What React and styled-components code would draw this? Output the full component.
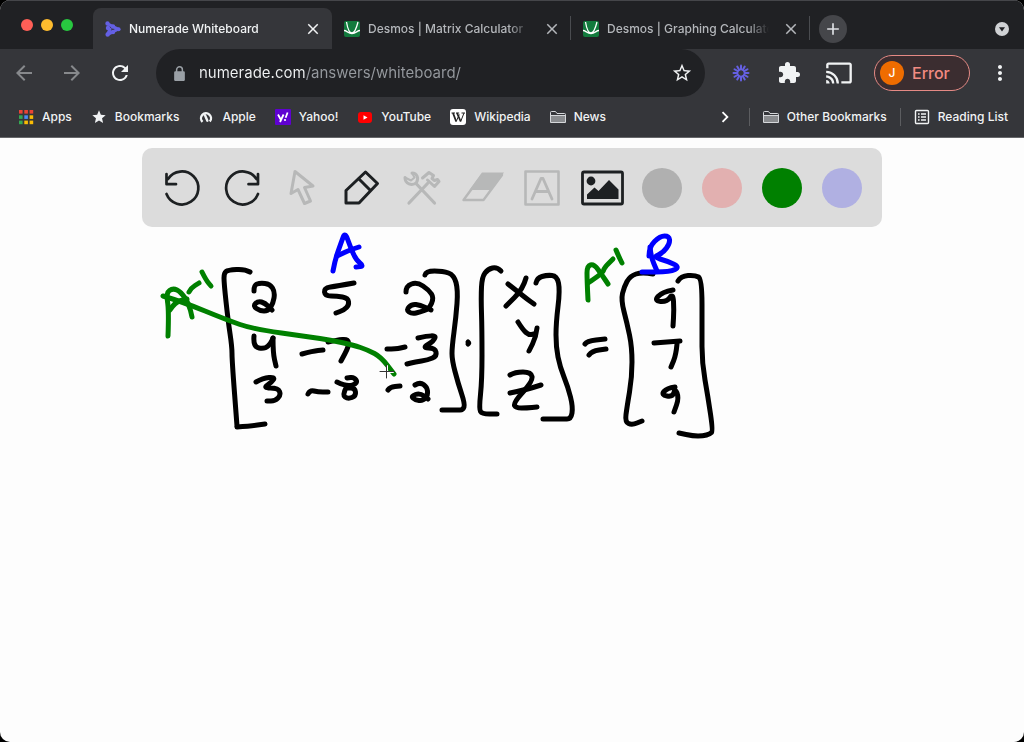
import React, { useState } from 'react';
import styled, { createGlobalStyle } from 'styled-components';
import {
    MdArrowBack, MdArrowForward, MdRefresh, MdStarBorder, MdStar,
    MdExtension, MdCast, MdMoreVert, MdClose, MdAdd, MdChevronRight,
} from 'react-icons/md';

const tabs = [
    { title: 'Numerade Whiteboard', icon: 'numerade', active: true },
    { title: 'Desmos | Matrix Calculator', icon: 'desmos' },
    { title: 'Desmos | Graphing Calculator', icon: 'desmos' },
];

const bookmarks = [
    { label: 'Apps', Icon: AppsIcon },
    { label: 'Bookmarks', Icon: StarIcon },
    { label: 'Apple', Icon: AppleIcon },
    { label: 'Yahoo!', Icon: YahooIcon },
    { label: 'YouTube', Icon: YoutubeIcon },
    { label: 'Wikipedia', Icon: WikipediaIcon },
    { label: 'News', Icon: FolderIcon },
];

const tools = [
    { name: 'Undo', Icon: UndoIcon },
    { name: 'Redo', Icon: RedoIcon },
    { name: 'Select', Icon: PointerIcon, faded: true },
    { name: 'Pen', Icon: PenIcon },
    { name: 'Tools', Icon: ToolsIcon, faded: true },
    { name: 'Eraser', Icon: EraserIcon, faded: true },
    { name: 'Text', Icon: TextIcon, faded: true },
    { name: 'Image', Icon: ImageIcon },
];

const colors = [
    { name: 'black', full: '#000000', soft: '#b0b0b0' },
    { name: 'red', full: '#e00000', soft: '#e2b0b0' },
    { name: 'green', full: '#008000', soft: '#b0d0b0' },
    { name: 'blue', full: '#0000ff', soft: '#b0b0e2' },
];

// every stroke is a list of x y pairs on the board
const strokes = [
    // matrix A
    ['black', '250 272 245 269 228 270 224 273 224 283 228 320 232 347 232 360 237 426'],
    ['black', '237 427 250 426 265 424'],
    ['black', '254 291 254 285 260 283 270 284 275 292 273 304 268 311 260 311 253 306 258 301 265 303 272 310'],
    ['black', '354 283 337 286 324 288 325 296 337 296 348 298 349 305 344 310 336 313'],
    ['black', '406 292 406 286 417 282 429 290 434 298 429 309 420 312 412 314 406 310 412 304 420 305 431 310'],
    ['black', '254 336 253 347 265 349 271 343 273 338'],
    ['black', '273 338 273 353 276 366'],
    ['black', '302 354 313 351 323 350'],
    ['black', '328 342 337 340 348 339 349 346 341 361'],
    ['black', '387 349 396 349 405 347'],
    ['black', '418 338 436 334 434 341 422 348 435 348 437 356 428 360 415 362 407 364'],
    ['black', '256 382 263 378 275 377 272 382 263 388 278 388 281 395 275 401 267 401'],
    ['black', '308 394 310 390 318 392 328 392'],
    ['black', '337 382 347 387 358 383 354 377 347 378'],
    ['black', '347 386 342 395 348 399 356 396 355 388 347 388'],
    ['black', '388 390 390 387 400 386'],
    ['black', '415 385 420 382 427 387 428 395 423 401 415 400 411 396 420 393 428 399'],
    ['black', '425 275 426 271 443 271 454 275 458 290 456 317 452 347 452 360 458 383 465 404 463 410 457 410 442 410'],
    // dot
    ['black', '468 342 469 343 468 344'],
    // x y z
    ['black', '501 271 497 267 488 269 482 277 481 297 482 330 482 380 479 409 482 414 497 414'],
    ['black', '508 284 517 291 527 299 534 304'],
    ['black', '526 278 523 289 506 306'],
    ['black', '518 322 523 330 529 335 534 334'],
    ['black', '537 328 536 337 529 351'],
    ['black', '510 375 515 372 531 372 533 381 513 403 516 408 527 408 537 407'],
    ['black', '510 393 525 390 541 385'],
    ['black', '536 283 537 278 547 275 557 276 560 290 556 323 556 347 560 367 568 387 573 407 571 419 563 419 543 419'],
    // equals
    ['black', '585 344 587 341 605 339'],
    ['black', '589 355 592 351 606 349'],
    // vector B
    ['black', '653 274 642 272 630 276 624 287 621 300 627 323 632 347 632 377 627 407 625 422 632 425 642 421'],
    ['black', '673 290 662 292 654 301 667 302 673 293 674 310 673 326'],
    ['black', '654 343 667 342 680 341'],
    ['black', '677 344 676 355 671 367'],
    ['black', '675 387 667 388 661 395 673 397 675 388 679 398 674 412'],
    ['black', '678 281 681 276 695 275 702 279 702 330 702 363 708 397 713 431 710 434 703 436 693 436 679 433'],
    // labels
    ['blue', '333 271 335 260 341 243 345 232 350 246 356 260 364 266 356 267'],
    ['blue', '337 256 347 251 359 247'],
    ['blue', '649 256 649 247 660 236 669 236 670 243 663 253 653 257 667 261 680 267 670 272 642 272'],
    ['blue', '650 247 651 257 657 271'],
    ['green', '588 300 587 280 587 266 594 264 602 275 608 284'],
    ['green', '588 283 603 273 604 268 613 259'],
    ['green', '616 250 619 257 622 263'],
    ['green', '168 336 169 310 166 293 173 288 181 292 189 304 192 317'],
    ['green', '170 310 175 302 187 299'],
    ['green', '189 292 191 288 199 283'],
    ['green', '202 272 206 280 211 286'],
    ['green', '163 296 183 302 227 320 253 329 310 337 330 340 353 345 368 350 381 357 394 374'],
];

// rounds the corners of a stroke with quadratic curves through the midpoints
function toPath(text) {
    const n = text.split(' ').map(Number);
    let d = `M${n[0]} ${n[1]}`;
    for (let i = 2; i < n.length - 2; i += 2) {
        const mx = (n[i] + n[i + 2]) / 2;
        const my = (n[i + 1] + n[i + 3]) / 2;
        d += ` Q${n[i]} ${n[i + 1]} ${mx} ${my}`;
    }
    return `${d} L${n[n.length - 2]} ${n[n.length - 1]}`;
}

function App() {
    const [url, setUrl] = useState('numerade.com/answers/whiteboard/');
    const [color, setColor] = useState('green');

    return (
        <Window>
            <GlobalStyle />
            <TabStrip>
                <Lights>
                    <Light $color="#ff5f57" />
                    <Light $color="#febc2e" />
                    <Light $color="#28c840" />
                </Lights>
                {tabs.map((tab) => (
                    <Tab key={tab.title} $active={tab.active}>
                        {tab.icon === 'numerade' ? <NumeradeIcon /> : <DesmosIcon />}
                        <TabTitle>{tab.title}</TabTitle>
                        <IconButton $size={18} aria-label="Close tab"><MdClose /></IconButton>
                    </Tab>
                ))}
                <NewTab aria-label="New tab"><MdAdd /></NewTab>
                <TabSearch aria-label="Search tabs">
                    <svg width="14" height="14" viewBox="0 0 14 14">
                        <circle cx="7" cy="7" r="7" fill="#d0d2d5" />
                        <path d="M4 5.3h6L7 9.5z" fill="#202124" />
                    </svg>
                </TabSearch>
            </TabStrip>

            <NavBar>
                <NavButtons>
                    <IconButton $size={24} $color="#87898c" aria-label="Back"><MdArrowBack /></IconButton>
                    <IconButton $size={24} $color="#87898c" aria-label="Forward"><MdArrowForward /></IconButton>
                    <IconButton $size={24} aria-label="Reload"><MdRefresh /></IconButton>
                </NavButtons>
                <AddressBar>
                    <LockIcon />
                    <Address aria-label="Address" value={url} onChange={(e) => setUrl(e.target.value)} />
                    <IconButton $size={22} aria-label="Bookmark this page"><MdStarBorder /></IconButton>
                </AddressBar>
                <Extensions>
                    <IconButton $size={24} aria-label="Loom"><LoomIcon /></IconButton>
                    <IconButton $size={24} aria-label="Extensions"><MdExtension /></IconButton>
                    <IconButton $size={28} aria-label="Cast"><MdCast /></IconButton>
                </Extensions>
                <Profile>
                    <Avatar>J</Avatar>
                    Error
                </Profile>
                <IconButton $size={24} aria-label="Menu"><MdMoreVert /></IconButton>
            </NavBar>

            <BookmarkBar>
                {bookmarks.map(({ label, Icon }) => (
                    <Bookmark key={label} href="#"><Icon />{label}</Bookmark>
                ))}
                <More aria-label="More bookmarks"><MdChevronRight /></More>
                <Divider />
                <Bookmark href="#"><FolderIcon />Other Bookmarks</Bookmark>
                <Divider />
                <Bookmark href="#"><ListIcon />Reading List</Bookmark>
            </BookmarkBar>

            <Board>
                <Tools>
                    {tools.map(({ name, Icon, faded }) => (
                        <Tool key={name} aria-label={name} $faded={faded}><Icon /></Tool>
                    ))}
                    {colors.map((c) => (
                        <Swatch
                            key={c.name}
                            type="radio"
                            name="color"
                            aria-label={c.name}
                            checked={color === c.name}
                            onChange={() => setColor(c.name)}
                            $full={c.full}
                            $soft={c.soft}
                        />
                    ))}
                </Tools>
                <Sketch viewBox="142 227 740 220">
                    {strokes.map(([ink, points]) => (
                        <path key={points} d={toPath(points)} stroke={ink} />
                    ))}
                    <path d="M387 366v12M381 372h12" stroke="#fff" strokeWidth="2" />
                    <path d="M386.5 365v13M380 371.5h14" stroke="#333" strokeWidth="1" />
                </Sketch>
            </Board>
        </Window>
    );
}

function NumeradeIcon() {
    return (
        <svg width="16" height="16" viewBox="0 0 16 16" fill="none" stroke="#6460e4" strokeLinecap="round">
            <path d="M3 3l10 5.2M3 13.5l10-5.3M5 8.2L2.5 13.5" strokeWidth="3" />
            <path d="M2.500 2.500v.01M3 7v.01M8 5.500v.01M8 11v.01M2.600 13.500v.01" strokeWidth="4.400" />
            <path d="M13.600 8.200v.01" strokeWidth="4" />
        </svg>
    );
}

function DesmosIcon() {
    return (
        <svg width="16" height="16" viewBox="0 0 16 16" fill="none">
            <rect width="16" height="16" rx="2" fill="#127a3d" />
            <path d="M2.500 1c1 6 3 11 5.500 11s4.500-5 6-11M0 9.500c3 0 4 3 8 3s5-3 8-3" stroke="#fff" strokeWidth="1.300" />
        </svg>
    );
}

function LockIcon() {
    return (
        <svg width="14" height="14" viewBox="0 0 14 14" fill="none" stroke="#9aa0a6">
            <rect x="2" y="5" width="10" height="9" rx="1.200" fill="#9aa0a6" stroke="none" />
            <path d="M4.300 6V3.500a2.700 2.700 0 0 1 5.400 0V6" strokeWidth="1.400" />
        </svg>
    );
}

function LoomIcon() {
    return (
        <svg viewBox="0 0 24 24" stroke="#6560e2" strokeWidth="2" strokeLinecap="round">
            {[...Array(12)].map((_, i) => (
                <path key={i} d="M12 4.500v3.800" transform={`rotate(${i * 30} 12 12)`} />
            ))}
            <circle cx="12" cy="12" r="3.500" fill="none" strokeWidth="1.400" />
        </svg>
    );
}

function AppsIcon() {
    const fills = ['#ea4335', '#ea4335', '#ea4335', '#34a853', '#4c8bf5', '#fbbc04', '#34a853', '#fbbc04', '#fbbc04'];
    return (
        <svg width="16" height="16" viewBox="0 0 16 16">
            {fills.map((fill, i) => (
                <rect key={i} x={1 + (i % 3) * 5.3} y={1 + Math.floor(i / 3) * 5.3} width="3.600" height="3.600" fill={fill} />
            ))}
        </svg>
    );
}

function StarIcon() {
    return <MdStar size={16} />;
}

function AppleIcon() {
    return (
        <svg width="16" height="16" viewBox="0 0 16 16" fill="none" stroke="#f1f3f4">
            <path d="M4.500 12.800A5 5 0 1 1 11.800 12.500" strokeWidth="2.400" />
            <path d="M7 6.200l2.400 5.500" strokeWidth="2.400" strokeLinecap="round" />
        </svg>
    );
}

function YahooIcon() {
    return (
        <svg width="16" height="16" viewBox="0 0 16 16" fill="none" stroke="#fff" strokeWidth="1.800">
            <rect width="16" height="16" rx="1" fill="#5f01d1" stroke="none" />
            <path d="M3 5.500l2.600 4.800M8.600 5.500L5 13M12.600 3.500l-2 5.200" />
            <circle cx="10" cy="11" r="1.100" fill="#fff" stroke="none" />
        </svg>
    );
}

function YoutubeIcon() {
    return (
        <svg width="16" height="16" viewBox="0 0 16 16">
            <rect x="1" y="3" width="14" height="11" rx="3" fill="#f00" />
            <path d="M6.500 6.200v4.600l4-2.300z" fill="#fff" />
        </svg>
    );
}

function WikipediaIcon() {
    return (
        <svg width="16" height="16" viewBox="0 0 16 16" fill="none" stroke="#222">
            <rect width="16" height="16" rx="3" fill="#fff" stroke="none" />
            <path d="M3 4l3.200 8.500M7 4l3.700 8.500" strokeWidth="1.800" />
            <path d="M6.200 12.500L9.300 5.500M10.700 12.500L14 4M1.500 4h3.500M6 4h3.200M11.500 4h3.500" strokeWidth="1" />
        </svg>
    );
}

function FolderIcon() {
    return (
        <svg width="16" height="16" viewBox="0 0 16 16" fill="none" stroke="#d5d7da">
            <path d="M.5 13.500V3.500q0-1 1-1h4l1.500 2h7.500q1 0 1 1v8z" />
            <path d="M1 7h14v6H1z" fill="#898b8e" stroke="none" />
            <path d="M1 6.500h14" />
        </svg>
    );
}

function ListIcon() {
    return (
        <svg width="16" height="16" viewBox="0 0 16 16" fill="none" stroke="#f1f3f4" strokeWidth="1.400">
            <rect x="1.500" y="1.500" width="13" height="13" rx="1" />
            <path d="M4 5h1.600M4 8h1.600M4 11h1.600M7 5h5M7 8h5M7 11h5" />
        </svg>
    );
}

function UndoIcon() {
    return (
        <svg viewBox="0 0 44 44">
            <path d="M6.500 28a16.500 16.500 0 1 0 1.500-15M6.500 8v10.200h9.500" strokeWidth="2.700" />
        </svg>
    );
}

function RedoIcon() {
    return (
        <svg viewBox="0 0 44 44">
            <path d="M38 28a16.500 16.500 0 1 1-1.500-15M38 8v10.200H28.500" strokeWidth="2.700" />
        </svg>
    );
}

function PointerIcon() {
    return (
        <svg viewBox="0 0 44 44">
            <path d="M15 5.500L11 27.500l7-4 6.500 14 6-2.500-6-13.500 8.500-1.500z" strokeWidth="3" />
        </svg>
    );
}

function PenIcon() {
    return (
        <svg viewBox="0 0 44 44">
            <path d="M25.500 6L37.500 17.500 19 37H6V24.500zM18.500 12.500L30.500 24.500" strokeWidth="3" />
        </svg>
    );
}

function ToolsIcon() {
    return (
        <svg viewBox="0 0 44 44">
            <path d="M9 37L27.500 17.500M34.500 37L16.500 18" strokeWidth="3.200" />
            <path d="M12 7c5 0 7 5 4.500 9.500-4.500 4-11.500 1.500-11.500-5" strokeWidth="3" />
            <path d="M12 7l2.500 4.500-3.500 3-6-3" strokeWidth="2" />
            <path d="M22.500 12l6.500-5.500 4.500 3-1.500 3 2.500 2 3-1 1.500 2-4.500 5-7-6.500" strokeWidth="3" />
        </svg>
    );
}

function EraserIcon() {
    return (
        <svg viewBox="0 0 44 44">
            <path d="M22 6.500H44L31 24H9.500z" fill="currentColor" stroke="none" />
            <path d="M22 9L3.500 34H23.500L42 9" strokeWidth="2.400" />
        </svg>
    );
}

function TextIcon() {
    return (
        <svg viewBox="0 0 44 44">
            <rect x="5.500" y="5.500" width="33" height="33" strokeWidth="2.600" />
            <path d="M12 33L21 12.500h2L32 33M15.500 25.500h13" strokeWidth="2.800" />
        </svg>
    );
}

function ImageIcon() {
    return (
        <svg viewBox="0 0 44 44">
            <rect x="2.500" y="6" width="40" height="32" rx="1.500" strokeWidth="2.800" />
            <circle cx="11" cy="15" r="4.400" fill="currentColor" stroke="none" />
            <path d="M7 33v-4.500l7.500-7 4 3.500L29 14l9.500 9.500V33z" fill="currentColor" stroke="none" />
        </svg>
    );
}

const GlobalStyle = createGlobalStyle`
  * {
    box-sizing: border-box;
  }

  body {
    margin: 0;
    background: #000;
    font-family: Inter, "Liberation Sans", sans-serif;
  }

  button {
    padding: 0;
    border: none;
    background: none;
    font: inherit;
    cursor: pointer;
  }
`;

const Window = styled.div`
  display: flex;
  flex-direction: column;
  min-height: 100vh;
  border-radius: 10px;
  overflow: hidden;
  background: #fdfdfd;
`;

const TabStrip = styled.div`
  display: flex;
  align-items: center;
  height: 49px;
  padding: 7px 15px 0 21px;
  background: #202124;
  border-top: 1px solid #45464a;
`;

const Lights = styled.div`
  display: flex;
  gap: 8px;
  width: 72px;
  padding-bottom: 7px;
`;

const Light = styled.span`
  width: 12px;
  height: 12px;
  border-radius: 50%;
  background: ${(p) => p.$color};
`;

const Tab = styled.div`
  display: flex;
  align-items: center;
  gap: 8px;
  flex: 0 1 239px;
  min-width: 0;
  height: 100%;
  padding: 0 10px 0 12px;
  border-radius: 8px 8px 0 0;
  background: ${(p) => (p.$active ? '#35363a' : 'transparent')};
  color: ${(p) => (p.$active ? '#f1f3f4' : '#b4b7bb')};

  > svg {
    flex: none;
  }

  button {
    color: inherit;
  }

  & + & {
    background-image: linear-gradient(#4a4c50, #4a4c50);
    background-size: 1px 24px;
    background-position: right 8px;
    background-repeat: no-repeat;
  }
`;

const TabTitle = styled.span`
  flex: 1;
  overflow: hidden;
  font-size: 12px;
  font-weight: 500;
  line-height: 16px;
  white-space: nowrap;
  mask-image: linear-gradient(to right, #000 84%, transparent 97%);
`;

const IconButton = styled.button`
  display: flex;
  flex: none;
  color: ${(p) => p.$color || '#f1f3f4'};

  svg {
    width: ${(p) => p.$size}px;
    height: ${(p) => p.$size}px;
  }
`;

const NewTab = styled.button`
  display: flex;
  flex: none;
  align-items: center;
  justify-content: center;
  width: 28px;
  height: 28px;
  margin: 0 auto 0 9px;
  border-radius: 50%;
  background: #45464a;
  color: #dfe1e5;
  font-size: 20px;
`;

const TabSearch = styled.button`
  display: flex;
`;

const NavBar = styled.div`
  display: flex;
  align-items: center;
  height: 48px;
  padding: 0 12px;
  background: #35363a;
`;

const NavButtons = styled.div`
  display: flex;
  gap: 24px;
  width: 144px;
`;

const AddressBar = styled.div`
  display: flex;
  flex: 1;
  align-items: center;
  gap: 12px;
  min-width: 0;
  height: 48px;
  padding: 0 12px 0 16px;
  border-radius: 24px;
  background: #202124;

  > svg {
    flex: none;
    width: 15px;
    height: 15px;
  }
`;

const Address = styled.input`
  flex: 1;
  min-width: 0;
  padding: 0;
  border: none;
  outline: none;
  /* the host is brighter than the path */
  background: linear-gradient(to right, #f1f3f4 107px, #969a9f 107px);
  background-clip: text;
  color: transparent;
  caret-color: #fff;
  font-family: Inter, "Liberation Sans", sans-serif;
  font-size: 15px;
  line-height: 20px;
`;

const Extensions = styled.div`
  display: flex;
  align-items: center;
  gap: 24px;
  padding: 0 21px 0 24px;
`;

const Profile = styled.button`
  display: flex;
  flex: none;
  align-items: center;
  gap: 8px;
  width: 96px;
  height: 36px;
  margin-right: 18px;
  padding: 0 5px;
  border: 1px solid #e58a85;
  border-radius: 18px;
  background: #3b2d30;
  color: #f28b82;
  font-size: 16px;
  font-weight: 500;
`;

const Avatar = styled.span`
  width: 24px;
  height: 24px;
  border-radius: 50%;
  background: #ef6c00;
  color: #fff;
  font-size: 12px;
  line-height: 24px;
`;

const BookmarkBar = styled.nav`
  display: flex;
  align-items: center;
  gap: 19px;
  height: 41px;
  padding: 0 16px 0 18px;
  background: #35363a;
  border-bottom: 1px solid #66676a;
`;

const Bookmark = styled.a`
  display: flex;
  flex: none;
  align-items: center;
  gap: 8px;
  color: #f1f3f4;
  font-size: 12px;
  font-weight: 500;
  line-height: 16px;
  text-decoration: none;
`;

const More = styled.button`
  display: flex;
  margin-left: auto;
  color: #fff;
  font-size: 22px;
`;

const Divider = styled.span`
  width: 1px;
  height: 18px;
  margin: 0 -6px;
  background: #5c5d60;
`;

const Board = styled.main`
  display: flex;
  flex-direction: column;
  align-items: center;
  flex: 1;
  padding: 10px 16px;
`;

const Tools = styled.div`
  display: grid;
  grid-template-columns: repeat(12, 1fr);
  align-items: center;
  justify-items: center;
  width: 100%;
  max-width: 740px;
  height: 79px;
  padding: 0 10px;
  border-radius: 10px;
  background: #dcdcdc;
`;

const Tool = styled.button`
  display: flex;
  color: ${(p) => (p.$faded ? '#b7b8b8' : '#1d2022')};

  svg {
    width: 44px;
    height: 44px;
    fill: none;
    stroke: currentColor;
    stroke-linecap: round;
    stroke-linejoin: round;
  }
`;

const Swatch = styled.input`
  appearance: none;
  width: 40px;
  height: 40px;
  margin: 0;
  border-radius: 50%;
  background: ${(p) => (p.checked ? p.$full : p.$soft)};
  cursor: pointer;
`;

const Sketch = styled.svg`
  width: 100%;
  max-width: 740px;
  fill: none;
  stroke-width: 5px;
  stroke-linecap: round;
  stroke-linejoin: round;
`;

export default App;
